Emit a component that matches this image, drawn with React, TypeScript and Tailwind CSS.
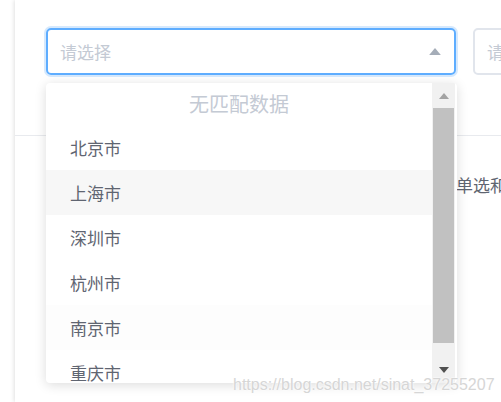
import React from "react";

const cities = ["北京市", "上海市", "深圳市", "杭州市", "南京市", "重庆市"];

function Caret({ up, className }: { up?: boolean; className: string }) {
  return (
    <svg viewBox="0 0 10 6" className={className} fill="currentColor">
      {up ? <path d="M5 0L10 6H0Z" /> : <path d="M0 0H10L5 6Z" />}
    </svg>
  );
}

function CityDropdown() {
  return (
    <div className="absolute left-[46px] top-[83px] flex h-[300px] w-[411px] overflow-hidden rounded-[4px] bg-white pr-[2px] shadow-[0_2px_12px_rgba(0,0,0,0.14)]">
      <ul className="flex-1">
        <li className="flex h-[42px] items-center justify-center text-[20px] text-[#c4cad4]">
          无匹配数据
        </li>
        {cities.map((c, i) => (
          <li
            key={c}
            className={`flex h-[45px] items-center pl-[24px] text-[17px] text-[#5f6571] ${
              i === 1 ? "bg-[#f7f7f7]" : i === 4 ? "bg-[#fdfdfd]" : ""
            }`}
          >
            {c}
          </li>
        ))}
      </ul>
      <div className="flex w-[23px] flex-col bg-[#f1f1f1]">
        <div className="flex h-[25px] items-start justify-center pt-[10px]">
          <Caret up className="h-[6px] w-[10px] text-[#a3a3a3]" />
        </div>
        <div className="mx-[1px] h-[235px] bg-[#c1c1c1]" />
        <div className="flex justify-center pt-[24px]">
          <Caret className="h-[6px] w-[10px] text-[#505050]" />
        </div>
      </div>
    </div>
  );
}

export default function App() {
  return (
    <div className="relative h-[402px] w-[501px] overflow-hidden bg-white font-['Noto_Sans_CJK_SC','Microsoft_YaHei',sans-serif]">
      <div className="ml-[15px] h-full bg-white shadow-[-1px_0_4px_rgba(0,0,0,0.12)]">
        <div className="flex gap-[17px] pl-[31px] pt-[28px]">
          <div className="flex h-[47px] w-[410px] shrink-0 items-center justify-between rounded-[5px] border-2 border-[#5eadff] pl-[12px] pr-[12px] shadow-[0_0_0_2px_#d6e9fd]">
            <span className="text-[17px] text-[#c4cad4]">请选择</span>
            <Caret up className="h-[7px] w-[14px] text-[#a5adb8]" />
          </div>
          <div className="flex h-[47px] w-[200px] shrink-0 items-center rounded-[5px] border-2 border-[#e1e5ec] pl-[12px]">
            <span className="text-[17px] text-[#c4cad4]">请选择</span>
          </div>
        </div>
        <div className="mt-[60px] border-t border-[#e8eaee]" />
        <p className="mt-[36px] pl-[441px] whitespace-nowrap text-[17px] text-[#5f6571]">
          单选和多选
        </p>
      </div>
      <CityDropdown />
      <span className="absolute left-[233px] top-[373px] font-['Liberation_Sans',sans-serif] text-[16px] text-[#d6d6d6] [text-shadow:0_0_2px_#fff,0_0_2px_#fff]">
        https://blog.csdn.net/sinat_37255207
      </span>
    </div>
  );
}
